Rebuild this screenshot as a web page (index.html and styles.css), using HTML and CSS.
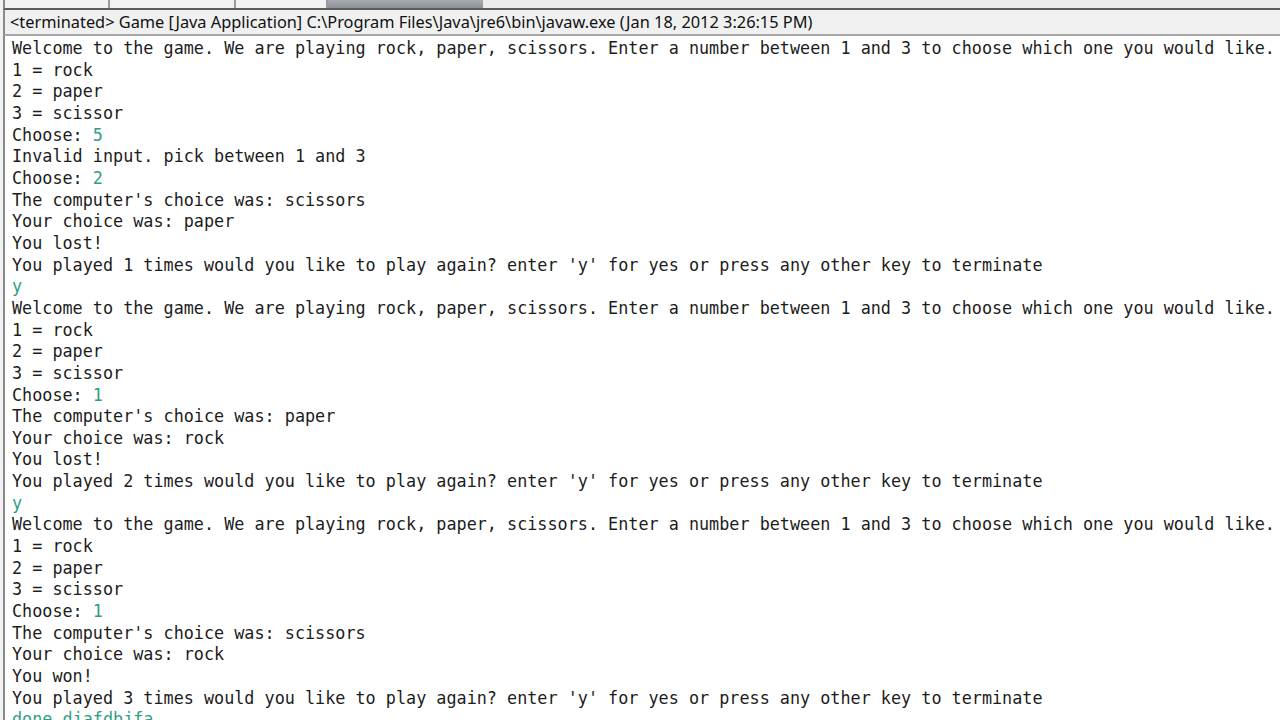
FILE: index.html
```html
<!DOCTYPE html>
<html>
<head>
<meta charset="utf-8">
<link rel="stylesheet" href="styles.css">
</head>
<body>
<div class="window">
  <div class="tabstrip">
    <div class="tab t1"></div>
    <div class="tab t2"></div>
    <div class="tab t3"></div>
    <div class="tab active"></div>
    <div class="tab rest"></div>
  </div>
  <div class="header">&lt;terminated&gt; Game [Java Application] C:\Program Files\Java\jre6\bin\javaw.exe (Jan 18, 2012 3:26:15 PM)</div>
  <div class="console">
    <div class="line">Welcome to the game. We are playing rock, paper, scissors. Enter a number between 1 and 3 to choose which one you would like.</div>
    <div class="line">1 = rock</div>
    <div class="line">2 = paper</div>
    <div class="line">3 = scissor</div>
    <div class="line">Choose: <span class="in">5</span></div>
    <div class="line">Invalid input. pick between 1 and 3</div>
    <div class="line">Choose: <span class="in">2</span></div>
    <div class="line">The computer's choice was: scissors</div>
    <div class="line">Your choice was: paper</div>
    <div class="line">You lost!</div>
    <div class="line">You played 1 times would you like to play again? enter 'y' for yes or press any other key to terminate</div>
    <div class="line in">y</div>
    <div class="line">Welcome to the game. We are playing rock, paper, scissors. Enter a number between 1 and 3 to choose which one you would like.</div>
    <div class="line">1 = rock</div>
    <div class="line">2 = paper</div>
    <div class="line">3 = scissor</div>
    <div class="line">Choose: <span class="in">1</span></div>
    <div class="line">The computer's choice was: paper</div>
    <div class="line">Your choice was: rock</div>
    <div class="line">You lost!</div>
    <div class="line">You played 2 times would you like to play again? enter 'y' for yes or press any other key to terminate</div>
    <div class="line in">y</div>
    <div class="line">Welcome to the game. We are playing rock, paper, scissors. Enter a number between 1 and 3 to choose which one you would like.</div>
    <div class="line">1 = rock</div>
    <div class="line">2 = paper</div>
    <div class="line">3 = scissor</div>
    <div class="line">Choose: <span class="in">1</span></div>
    <div class="line">The computer's choice was: scissors</div>
    <div class="line">Your choice was: rock</div>
    <div class="line">You won!</div>
    <div class="line">You played 3 times would you like to play again? enter 'y' for yes or press any other key to terminate</div>
    <div class="line in">done djafdbjfa</div>
  </div>
</div>
</body>
</html>
```
FILE: styles.css
```css
html, body {
  margin: 0;
  padding: 0;
  width: 1280px;
  height: 720px;
  overflow: hidden;
  background: #ffffff;
}
.window {
  display: flex;
  flex-direction: column;
  width: 1280px;
  height: 720px;
  overflow: hidden;
  border-left: 3px solid #f2f2f2;
  box-sizing: border-box;
}
.tabstrip {
  display: flex;
  height: 8px;
  background: #ececec;
  border-left: 2px solid #8a8a8a;
  border-bottom: 2px solid #5c5c5c;
  flex: none;
}
.tab {
  height: 8px;
  border-right: 2px solid #9a9a9a;
  background: #f3f3f3;
}
.t1 { width: 103px; }
.t2 { width: 124px; }
.t3 { width: 90px; }
.active {
  width: 155px;
  background: linear-gradient(#a9aeb3, #8b9197);
  border-right: none;
}
.rest {
  flex: 1;
  border-right: none;
  background: #ececec;
}
.header {
  flex: none;
  height: 24px;
  line-height: 24px;
  background: #f0f0f0;
  border-left: 2px solid #8a8a8a;
  border-bottom: 2px solid #a8a8a8;
  padding-left: 5px;
  font-family: "Noto Sans", "Open Sans", sans-serif;
  font-size: 16.35px;
  letter-spacing: 0;
  color: #111;
  white-space: nowrap;
}
.console {
  flex: 1;
  border-left: 2px solid #8a8a8a;
  padding-left: 7px;
  padding-top: 2px;
  font-family: "DejaVu Sans Mono", "Liberation Mono", monospace;
  font-size: 16.8px;
  line-height: 21.67px;
  color: #1c1c1c;
  overflow: hidden;
}
.line {
  height: 21.67px;
  white-space: pre;
}
.in {
  color: #2f9e82;
}
```
